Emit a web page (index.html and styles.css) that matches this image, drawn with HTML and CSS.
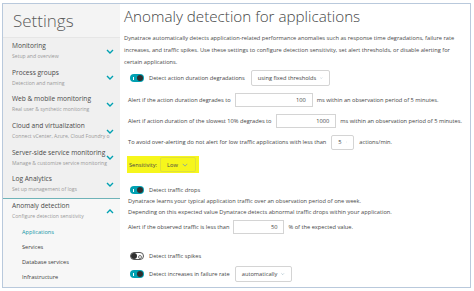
FILE: index.html
```html
<!DOCTYPE html>
<html lang="en">
<head>
    <meta charset="UTF-8">
    <title>Anomaly detection for applications</title>
    <link rel="stylesheet" href="styles.css">
</head>
<body>
    <div class="frame">
        <aside class="sidebar">
            <div class="sidebar-header">Settings</div>
            <div class="nav-item">
                <div class="nav-text">
                    <div class="nav-title">Monitoring</div>
                    <div class="nav-sub">Setup and overview</div>
                </div>
                <svg class="chev" viewBox="0 0 8 5"><path d="M1 1l3 3 3-3"/></svg>
            </div>
            <div class="nav-item">
                <div class="nav-text">
                    <div class="nav-title">Process groups</div>
                    <div class="nav-sub">Detection and naming</div>
                </div>
                <svg class="chev" viewBox="0 0 8 5"><path d="M1 1l3 3 3-3"/></svg>
            </div>
            <div class="nav-item">
                <div class="nav-text">
                    <div class="nav-title">Web &amp; mobile monitoring</div>
                    <div class="nav-sub">Real user &amp; synthetic monitoring</div>
                </div>
                <svg class="chev" viewBox="0 0 8 5"><path d="M1 1l3 3 3-3"/></svg>
            </div>
            <div class="nav-item">
                <div class="nav-text">
                    <div class="nav-title">Cloud and virtualization</div>
                    <div class="nav-sub">Connect vCenter, Azure, Cloud Foundry o</div>
                </div>
                <svg class="chev" viewBox="0 0 8 5"><path d="M1 1l3 3 3-3"/></svg>
            </div>
            <div class="nav-item">
                <div class="nav-text">
                    <div class="nav-title">Server-side service monitoring</div>
                    <div class="nav-sub">Manage &amp; customize service monitoring</div>
                </div>
                <svg class="chev" viewBox="0 0 8 5"><path d="M1 1l3 3 3-3"/></svg>
            </div>
            <div class="nav-item">
                <div class="nav-text">
                    <div class="nav-title">Log Analytics</div>
                    <div class="nav-sub">Set up management of logs</div>
                </div>
                <svg class="chev" viewBox="0 0 8 5"><path d="M1 1l3 3 3-3"/></svg>
            </div>
            <div class="nav-group">
                <div class="nav-item open">
                    <div class="nav-text">
                        <div class="nav-title">Anomaly detection</div>
                        <div class="nav-sub">Configure detection sensitivity</div>
                    </div>
                    <svg class="chev" viewBox="0 0 8 5"><path d="M1 4l3-3 3 3"/></svg>
                </div>
                <ul class="subnav">
                    <li class="active">Applications</li>
                    <li>Services</li>
                    <li>Database services</li>
                    <li>Infrastructure</li>
                </ul>
            </div>
        </aside>

        <main class="content">
            <h1>Anomaly detection for applications</h1>
            <p class="intro">Dynatrace automatically detects application-related performance anomalies such as response time degradations, failure rate increases, and traffic spikes. Use these settings to configure detection sensitivity, set alert thresholds, or disable alerting for certain applications.</p>

            <div class="row toggle-row first">
                <span class="toggle on"></span>
                <span>Detect action duration degradations</span>
                <span class="select wide">using fixed thresholds <svg class="sel-chev" viewBox="0 0 8 5"><path d="M1 1l3 3 3-3"/></svg></span>
            </div>

            <div class="row field-row">
                <span>Alert if the action duration degrades to</span>
                <span class="input w78">100</span>
                <span>ms within an observation period of 5 minutes.</span>
            </div>
            <div class="row field-row">
                <span>Alert if action duration of the slowest 10% degrades to</span>
                <span class="input w78">1000</span>
                <span>ms within an observation period of 5 minutes.</span>
            </div>
            <div class="row field-row">
                <span>To avoid over-alerting do not alert for low traffic applications with less than</span>
                <span class="select small">5 <svg class="sel-chev" viewBox="0 0 8 5"><path d="M1 1l3 3 3-3"/></svg></span>
                <span>actions/min.</span>
            </div>

            <div class="row sensitivity">
                <span class="highlight">Sensitivity:
                    <span class="select low">Low <svg class="sel-chev" viewBox="0 0 8 5"><path d="M1 1l3 3 3-3"/></svg></span>
                </span>
            </div>

            <div class="row toggle-row drops">
                <span class="toggle on"></span>
                <span>Detect traffic drops</span>
            </div>
            <p class="note">Dynatrace learns your typical application traffic over an observation period of one week.<br>Depending on this expected value Dynatrace detects abnormal traffic drops within your application.</p>
            <div class="row field-row traffic">
                <span>Alert if the observed traffic is less than</span>
                <span class="input w51">50</span>
                <span>% of the expected value.</span>
            </div>

            <div class="row toggle-row spikes">
                <span class="toggle off"></span>
                <span>Detect traffic spikes</span>
            </div>
            <div class="row toggle-row failure">
                <span class="toggle on"></span>
                <span>Detect increases in failure rate</span>
                <span class="select auto">automatically <svg class="sel-chev" viewBox="0 0 8 5"><path d="M1 1l3 3 3-3"/></svg></span>
            </div>
        </main>
    </div>
</body>
</html>
```

FILE: styles.css
```css
body {
    margin: 0;
    background: #fff;
    font-family: 'Open Sans', sans-serif;
    color: #454646;
    overflow: hidden;
}
.frame {
    display: flex;
    margin: 3px 0 0 2px;
    width: 467px;
    height: 283px;
    border: 1px solid #b9c9dc;
    overflow: hidden;
}
.sidebar {
    width: 117px;
    flex-shrink: 0;
    background: #f0f0f0;
    overflow: hidden;
}
.sidebar-header {
    height: 33px;
    padding-left: 10px;
    font-size: 17px;
    font-weight: 300;
    line-height: 33px;
    color: #5a5a5a;
    background: #f4f4f4;
    border-bottom: 1px solid #e6e6e6;
}
.nav-item {
    display: flex;
    align-items: center;
    height: 26.6px;
    padding: 0 6px 0 9px;
    box-sizing: border-box;
}
.nav-text {
    flex: 1;
    min-width: 0;
}
.nav-title {
    font-size: 6.6px;
    line-height: 10px;
    color: #4a4a4a;
    white-space: nowrap;
}
.nav-sub {
    font-size: 5.1px;
    line-height: 9px;
    margin-top: 1px;
    color: #999;
    white-space: nowrap;
}
.chev {
    width: 8px;
    height: 5px;
    margin-left: 2px;
    flex-shrink: 0;
    fill: none;
    stroke: #00a1b2;
    stroke-width: 1.4;
}
.nav-group {
    border-top: 1px solid #6fb3b8;
    background: #f7f7f7;
    height: 100%;
}
.nav-group .nav-item {
    height: 25px;
}
.subnav {
    list-style: none;
    margin: 0;
    padding: 1px 0 0 19px;
}
.subnav li {
    font-size: 5.6px;
    line-height: 15px;
    color: #3d3d3d;
}
.subnav li.active {
    color: #0e95a6;
}
.content {
    flex: 1;
    min-width: 0;
    padding: 1px 8px 0 4px;
    background: #fff;
}
h1 {
    margin: 0;
    font-size: 15.2px;
    font-weight: 300;
    line-height: 22px;
    color: #454646;
    white-space: nowrap;
}
.intro {
    margin: 5px 0 0;
    font-size: 5.7px;
    line-height: 12px;
    color: #4a4a4a;
}
.row {
    display: flex;
    align-items: center;
    gap: 4px;
    font-size: 5.7px;
    white-space: nowrap;
    padding-left: 4px;
}
.toggle-row {
    gap: 5px;
    padding-left: 6px;
}
.first {
    margin-top: 2px;
    height: 16px;
}
.field-row {
    height: 14px;
    margin-top: 7px;
}
.toggle {
    position: relative;
    width: 14px;
    height: 8px;
    border-radius: 4px;
    box-sizing: border-box;
    flex-shrink: 0;
}
.toggle::after {
    content: '';
    position: absolute;
    top: 1px;
    width: 6px;
    height: 6px;
    border-radius: 50%;
    background: #2f2f2f;
}
.toggle.on {
    background: #00a1b2;
}
.toggle.on::before {
    content: '';
    position: absolute;
    left: 3px;
    top: 2.5px;
    width: 1px;
    height: 3px;
    background: #fff;
}
.toggle.on::after {
    right: 1px;
}
.toggle.off {
    background: #fff;
    border: 1px solid #555;
}
.toggle.off::after {
    top: 0;
    left: 0;
}
.toggle.off::before {
    content: '';
    position: absolute;
    right: 1px;
    top: 1.5px;
    width: 2px;
    height: 2px;
    border: 0.7px solid #777;
    border-radius: 50%;
}
.select {
    display: inline-flex;
    align-items: center;
    gap: 4px;
    height: 15px;
    padding: 0 6px;
    border: 1px solid #d4d4d4;
    border-radius: 2px;
    box-sizing: border-box;
    background: #fff;
    color: #454646;
}
.sel-chev {
    width: 6px;
    height: 4px;
    fill: none;
    stroke: #7a9db0;
    stroke-width: 1.1;
}
.wide {
    width: 79px;
    height: 16px;
    margin-left: 1px;
}
.small {
    width: 23px;
    margin: 0 1px;
}
.auto {
    width: 57px;
    height: 16px;
    justify-content: space-between;
}
.input {
    height: 14px;
    line-height: 12px;
    padding-right: 6px;
    border: 1px solid #d4d4d4;
    box-sizing: border-box;
    text-align: right;
    color: #454646;
}
.w78 {
    width: 78px;
}
.w51 {
    width: 51px;
}
.sensitivity {
    margin-top: 7px;
    padding-left: 3px;
}
.highlight {
    display: inline-flex;
    align-items: center;
    gap: 3px;
    height: 17px;
    padding: 0 3px 0 2px;
    background: #f6f61c;
}
.low {
    width: 36px;
    height: 15px;
    border-color: #e0e03a;
    background: transparent;
}
.drops {
    margin-top: 12px;
    height: 10px;
}
.note {
    margin: 0.5px 0 0;
    padding-left: 4px;
    font-size: 5.7px;
    line-height: 11px;
    color: #4a4a4a;
}
.traffic {
    margin-top: 2.5px;
}
.spikes {
    margin-top: 17px;
    height: 10px;
}
.failure {
    margin-top: 5px;
    height: 16px;
}
```
